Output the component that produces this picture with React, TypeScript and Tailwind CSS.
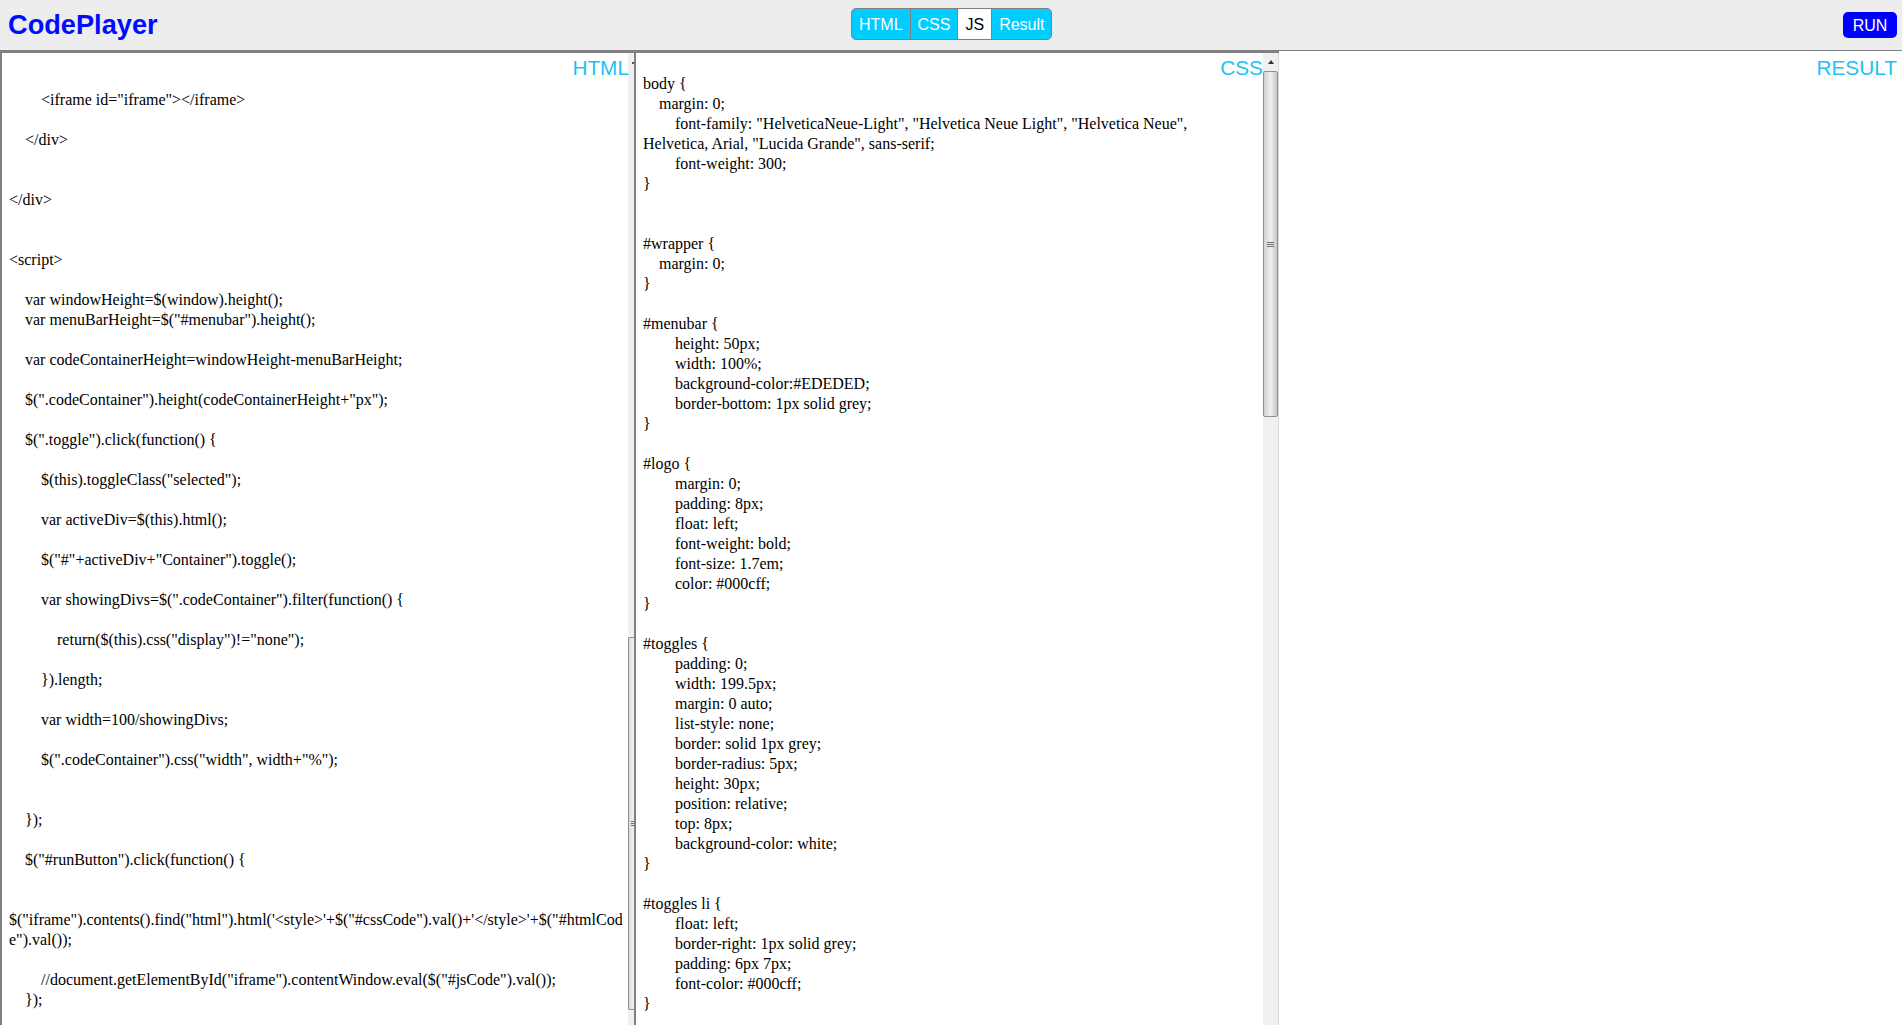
const htmlLines = `        <iframe id="iframe"></iframe>

    </div>


</div>


<script>

    var windowHeight=$(window).height();
    var menuBarHeight=$("#menubar").height();

    var codeContainerHeight=windowHeight-menuBarHeight;

    $(".codeContainer").height(codeContainerHeight+"px");

    $(".toggle").click(function() {

        $(this).toggleClass("selected");

        var activeDiv=$(this).html();

        $("#"+activeDiv+"Container").toggle();

        var showingDivs=$(".codeContainer").filter(function() {

            return($(this).css("display")!="none");

        }).length;

        var width=100/showingDivs;

        $(".codeContainer").css("width", width+"%");


    });

    $("#runButton").click(function() {


$("iframe").contents().find("html").html('<style>'+$("#cssCode").val()+'</style>'+$("#htmlCod
e").val());

        //document.getElementById("iframe").contentWindow.eval($("#jsCode").val());
    });`;

const cssLines = `body {
    margin: 0;
        font-family: "HelveticaNeue-Light", "Helvetica Neue Light", "Helvetica Neue",
Helvetica, Arial, "Lucida Grande", sans-serif;
        font-weight: 300;
}


#wrapper {
    margin: 0;
}

#menubar {
        height: 50px;
        width: 100%;
        background-color:#EDEDED;
        border-bottom: 1px solid grey;
}

#logo {
        margin: 0;
        padding: 8px;
        float: left;
        font-weight: bold;
        font-size: 1.7em;
        color: #000cff;
}

#toggles {
        padding: 0;
        width: 199.5px;
        margin: 0 auto;
        list-style: none;
        border: solid 1px grey;
        border-radius: 5px;
        height: 30px;
        position: relative;
        top: 8px;
        background-color: white;
}

#toggles li {
        float: left;
        border-right: 1px solid grey;
        padding: 6px 7px;
        font-color: #000cff;
}`;

function Grip() {
  return (
    <div className="flex flex-col gap-[1px]">
      <div className="h-[1px] w-[7px] bg-[#6f6f6f]" />
      <div className="h-[1px] w-[7px] bg-[#6f6f6f]" />
      <div className="h-[1px] w-[7px] bg-[#6f6f6f]" />
    </div>
  );
}

function Toggle({ label, active, last }: { label: string; active?: boolean; last?: boolean }) {
  return (
    <div
      className={`h-full px-[7px] pt-[1px] flex items-center ${last ? "" : "border-r border-[#808080]"} ${
        active ? "bg-white text-black" : "text-white"
      }`}
    >
      {label}
    </div>
  );
}

export default function App() {
  return (
    <div className="h-[1025px] w-[1902px] overflow-hidden flex flex-col bg-white font-['Liberation_Sans',Arial,sans-serif]">
      <header className="h-[51px] shrink-0 bg-[#ededed] border-b border-[#808080] flex items-start justify-between relative">
        <div className="w-[300px] pl-2 pt-[9px] text-[27.2px] leading-[31px] font-bold text-[#000cff]">CodePlayer</div>
        <div className="ml-[1px] mt-[8px] h-[32px] w-[201px] border border-[#808080] rounded-[5px] bg-[#00ccff] overflow-hidden flex text-base">
          <Toggle label="HTML" />
          <Toggle label="CSS" />
          <Toggle label="JS" active />
          <Toggle label="Result" last />
        </div>
        <div className="w-[300px] flex justify-end pr-[5px] pt-[12px]">
          <div className="h-[26px] w-[54px] pt-[1px] rounded-[5px] bg-[#0000ff] text-white text-base flex items-center justify-center">RUN</div>
        </div>
      </header>

      <main className="flex-1 min-h-0 flex">
        <section className="w-[634px] shrink-0 flex border-l-2 border-t-2 border-[#808080] relative">
          <div className="absolute right-[5px] top-[2px] text-[20.8px] leading-[26px] text-[#1fc1f2]">HTML</div>
          <pre className="flex-1 min-w-0 overflow-hidden pt-[37px] pl-[7px] text-[16px] leading-[20px] text-black font-['Liberation_Serif','Times_New_Roman',serif]">{htmlLines}</pre>
          <div className="w-[6px] shrink-0 bg-[#f0f0f0] flex flex-col">
            <div className="h-[584px] shrink-0 flex flex-col items-end pt-[9px]">
              <div className="h-[2px] w-[2px] bg-[#555555]" />
            </div>
            <div className="h-[373px] shrink-0 border-l border-t border-b border-[#8f8f8f] rounded-tl-[2px] rounded-bl-[2px] bg-linear-to-r from-[#dcdcdc] to-[#f4f4f4] flex items-center justify-end">
              <div className="flex flex-col gap-[1px]">
                <div className="h-[1px] w-[3px] bg-[#6f6f6f]" />
                <div className="h-[1px] w-[3px] bg-[#6f6f6f]" />
                <div className="h-[1px] w-[3px] bg-[#6f6f6f]" />
              </div>
            </div>
          </div>
        </section>

        <section className="w-[645px] shrink-0 flex border-l-2 border-t-2 border-[#808080] relative">
          <div className="absolute right-[16px] top-[2px] text-[20.8px] leading-[26px] text-[#1fc1f2]">CSS</div>
          <pre className="flex-1 min-w-0 overflow-hidden pt-[21px] pl-[7px] text-[16px] leading-[20px] text-black font-['Liberation_Serif','Times_New_Roman',serif]">{cssLines}</pre>
          <div className="w-[16px] shrink-0 bg-[#f0f0f0] border-r border-[#d8d8d8] flex flex-col">
            <div className="h-[18px] shrink-0 flex items-center justify-center">
              <div className="w-0 h-0 border-l-[3.5px] border-r-[3.5px] border-b-[4px] border-l-transparent border-r-transparent border-b-[#333333]" />
            </div>
            <div className="h-[346px] shrink-0 border border-[#8f8f8f] rounded-[2px] bg-linear-to-r from-[#d0d0d0] via-[#f0f0f2] to-[#c8c8cc] flex items-center justify-center">
              <Grip />
            </div>
          </div>
        </section>

        <section className="flex-1 min-w-0 relative">
          <div className="absolute right-[5px] top-[4px] text-[20.8px] leading-[26px] text-[#1fc1f2]">RESULT</div>
        </section>
      </main>
    </div>
  );
}
